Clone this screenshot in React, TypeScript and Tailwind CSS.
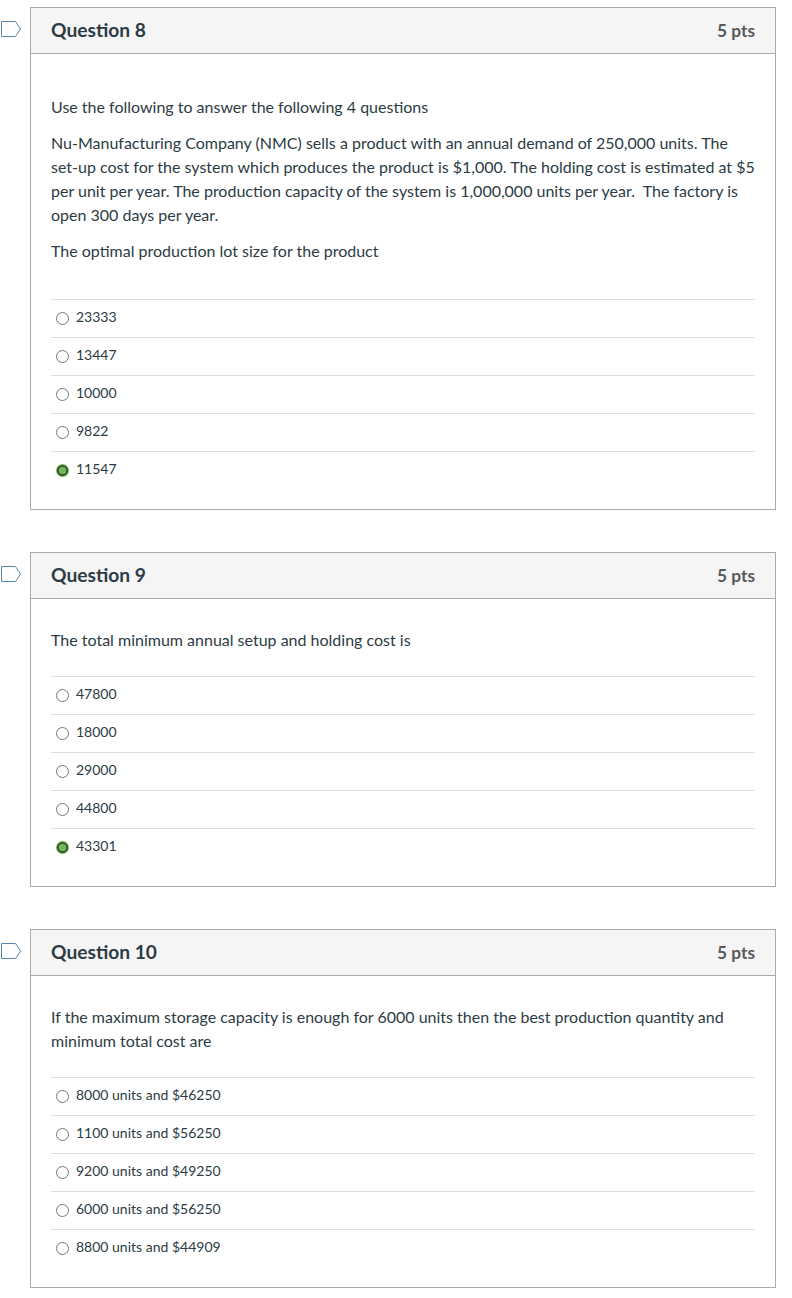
type Question = {
  title: string;
  paragraphs: string[];
  answers: string[];
  selected?: number;
  roomy?: boolean;
};

const questions: Question[] = [
  {
    title: "Question 8",
    paragraphs: [
      "Use the following to answer the following 4 questions",
      "Nu-Manufacturing Company (NMC) sells a product with an annual demand of 250,000 units. The set-up cost for the system which produces the product is $1,000. The holding cost is estimated at $5 per unit per year. The production capacity of the system is 1,000,000 units per year.\u00a0 The factory is open 300 days per year.",
      "The optimal production lot size for the product",
    ],
    answers: ["23333", "13447", "10000", "9822", "11547"],
    selected: 4,
    roomy: true,
  },
  {
    title: "Question 9",
    paragraphs: ["The total minimum annual setup and holding cost is"],
    answers: ["47800", "18000", "29000", "44800", "43301"],
    selected: 4,
  },
  {
    title: "Question 10",
    paragraphs: [
      "If the maximum storage capacity is enough for 6000 units then the best production quantity and minimum total cost are",
    ],
    answers: [
      "8000 units and $46250",
      "1100 units and $56250",
      "9200 units and $49250",
      "6000 units and $56250",
      "8800 units and $44909",
    ],
  },
];

function FlagIcon() {
  return (
    <svg viewBox="0 0 22 18" fill="white" className="mt-5 h-[18px] w-[22px] shrink-0" stroke="#5c84a3">
      <path d="M1.5 1.5h14l5 7.5-5 7.5h-14z" />
    </svg>
  );
}

function RadioIcon({ checked }: { checked: boolean }) {
  return (
    <svg viewBox="0 0 13 13" className="mt-[5px] h-[13px] w-[13px] shrink-0">
      {checked ? (
        <>
          <circle cx="6.5" cy="6.5" r="6.5" fill="#6db84b" />
          <circle cx="6.5" cy="6.5" r="4.6" fill="#73b856" stroke="#303a36" strokeWidth={1.5} />
        </>
      ) : (
        <circle cx="6.5" cy="6.5" r="6" fill="white" stroke="#767676" />
      )}
    </svg>
  );
}

function QuestionCard({ title, paragraphs, answers, selected, roomy = false }: Question) {
  return (
    <section className="flex">
      <div className="w-[30px] shrink-0">
        <FlagIcon />
      </div>
      <div className="mt-[7px] w-[746px] border border-[#aaaaaa] bg-white">
        <header className="flex h-[46px] items-center justify-between border-b border-[#aaaaaa] bg-[#f5f5f5] px-5">
          <h2 className="text-[19.2px] font-bold">{title}</h2>
          <span className="text-[17.3px] font-bold text-[#595959]">5 pts</span>
        </header>
        <div className={roomy ? "px-5 pt-[41px] pb-5" : "px-5 pt-[29px] pb-5"}>
          <div className={roomy ? "mb-9 flex flex-col gap-3" : "mb-6"}>
            {paragraphs.map((text) => (
              <p key={text} className="text-base leading-6">
                {text}
              </p>
            ))}
          </div>
          <ul>
            {answers.map((answer, i) => (
              <li key={answer} className="flex h-[38px] gap-[7px] border-t border-[#dddddd] pt-[7px] pl-[5px]">
                <RadioIcon checked={i === selected} />
                <span className="text-sm leading-5">{answer}</span>
              </li>
            ))}
          </ul>
        </div>
      </div>
    </section>
  );
}

export default function App() {
  return (
    <main className="flex min-h-screen w-[792px] flex-col gap-[35px] bg-white font-['Lato',sans-serif] text-[#2d3b45]">
      {questions.map((question) => (
        <QuestionCard key={question.title} {...question} />
      ))}
    </main>
  );
}
